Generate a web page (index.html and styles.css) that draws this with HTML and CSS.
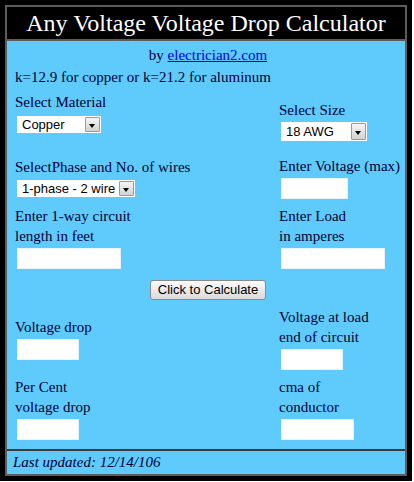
FILE: index.html
```html
<!DOCTYPE html>
<html lang="en">
<head>
    <meta charset="UTF-8">
    <meta name="viewport" content="width=device-width, initial-scale=1.0">
    <title>Any Voltage Voltage Drop Calculator</title>
    <link rel="stylesheet" href="styles.css">
</head>
<body>
    <div class="calc">
        <div class="frame">
            <h1 class="title">Any Voltage Voltage Drop Calculator</h1>

            <form class="panel" onsubmit="return false;">
                <p class="credit">by <a href="#">electrician2.com</a></p>
                <p class="note">k=12.9 for copper or k=21.2 for aluminum</p>

                <div class="row row-material">
                    <div class="field">
                        <label for="material">Select Material</label>
                        <span class="dropdown sel-material">
                            <select id="material">
                                <option>Copper</option>
                                <option>Aluminum</option>
                            </select>
                            <span class="arrow"></span>
                        </span>
                    </div>
                    <div class="field field-size">
                        <label for="size">Select Size</label>
                        <span class="dropdown sel-size">
                            <select id="size">
                                <option>18 AWG</option>
                                <option>16 AWG</option>
                                <option>14 AWG</option>
                                <option>12 AWG</option>
                                <option>10 AWG</option>
                            </select>
                            <span class="arrow"></span>
                        </span>
                    </div>
                </div>

                <div class="row row-phase">
                    <div class="field field-phase">
                        <label for="phase">SelectPhase and No. of wires</label>
                        <span class="dropdown sel-phase">
                            <select id="phase">
                                <option>1-phase - 2 wire</option>
                                <option>1-phase - 3 wire</option>
                                <option>3-phase - 3 wire</option>
                            </select>
                            <span class="arrow"></span>
                        </span>
                    </div>
                    <div class="field">
                        <label for="voltage">Enter Voltage (max)</label>
                        <input type="text" id="voltage" class="box w-voltage">
                    </div>
                </div>

                <div class="row row-length">
                    <div class="field">
                        <label for="length">Enter 1-way circuit<br>length in feet</label>
                        <input type="text" id="length" class="box w-wide">
                    </div>
                    <div class="field">
                        <label for="load">Enter Load<br>in amperes</label>
                        <input type="text" id="load" class="box w-wide">
                    </div>
                </div>

                <div class="actions">
                    <button type="button" class="calc-btn" onclick="calculate()">Click to Calculate</button>
                </div>

                <div class="row row-result">
                    <div class="field field-drop">
                        <label for="vdrop">Voltage drop</label>
                        <input type="text" id="vdrop" class="box w-small">
                    </div>
                    <div class="field">
                        <label for="vload">Voltage at load<br>end of circuit</label>
                        <input type="text" id="vload" class="box w-small">
                    </div>
                </div>

                <div class="row row-result">
                    <div class="field">
                        <label for="percent">Per Cent<br>voltage drop</label>
                        <input type="text" id="percent" class="box w-small">
                    </div>
                    <div class="field">
                        <label for="cma">cma of<br>conductor</label>
                        <input type="text" id="cma" class="box w-cma">
                    </div>
                </div>
            </form>

            <div class="footer">Last updated: 12/14/106</div>
        </div>
    </div>

    <script>
        // circular mils for each wire size
        const cmaTable = {
            '18 AWG': 1620, '16 AWG': 2580, '14 AWG': 4110,
            '12 AWG': 6530, '10 AWG': 10380
        };

        function calculate() {
            const k = document.getElementById('material').value === 'Copper' ? 12.9 : 21.2;
            const cma = cmaTable[document.getElementById('size').value];
            const phase = document.getElementById('phase').value;
            const volts = parseFloat(document.getElementById('voltage').value);
            const feet = parseFloat(document.getElementById('length').value);
            const amps = parseFloat(document.getElementById('load').value);
            if (!volts || !feet || !amps) return;

            const mult = phase.startsWith('3') ? 1.732 : 2;
            const drop = mult * k * feet * amps / cma;

            document.getElementById('vdrop').value = drop.toFixed(2);
            document.getElementById('vload').value = (volts - drop).toFixed(2);
            document.getElementById('percent').value = (drop / volts * 100).toFixed(2);
            document.getElementById('cma').value = cma;
        }
    </script>
</body>
</html>
```

FILE: styles.css
```css
body {
    margin: 0;
    font-family: "Liberation Serif", "Times New Roman", serif;
    color: #000033;
    background: #fff;
}
.calc {
    width: 412px;
    box-sizing: border-box;
    border: 5px solid #000;
    background: #000;
}
.frame {
    border: 2px solid #5c5c5c;
}
.title {
    margin: 0;
    height: 32px;
    line-height: 32px;
    font-size: 24px;
    font-weight: normal;
    color: #fff;
    text-align: center;
    background: #000;
}
.panel {
    background: #5fcbfc;
    border-top: 2px solid #5c5c5c;
    border-bottom: 2px solid #3c3c3c;
    padding: 4px 0 9px 8px;
    font-size: 15px;
    line-height: 20px;
}
.credit {
    margin: 0;
    padding-right: 4px;
    text-align: center;
}
.credit a {
    color: #0000ee;
}
.note {
    margin: 2px 0 0;
}
.row {
    display: grid;
    grid-template-columns: 264px 1fr;
}
.field label {
    display: block;
}
.row-material { margin-top: 5px; }
.row-phase { margin-top: 15px; }
.row-length { margin-top: 7px; }
.row-result { margin-top: 7px; }

.field-size { padding-top: 8px; }
.field-phase { padding-top: 1px; }
.field-drop { padding-top: 10px; }

/* text boxes */
.box {
    display: block;
    box-sizing: border-box;
    height: 21px;
    margin: 2px 0 0 2px;
    padding: 0 3px;
    border: 1px solid #e6f3fb;
    background: #fff;
    font: 13px "Liberation Sans", Arial, sans-serif;
}
.w-voltage { width: 67px; }
.w-wide { width: 104px; }
.w-small { width: 62px; }
.w-cma { width: 73px; }

/* drop-down lists with the old grey arrow button */
.dropdown {
    position: relative;
    display: block;
    margin: 2px 0 0 2px;
    background: #fff;
}
.dropdown select {
    appearance: none;
    -webkit-appearance: none;
    display: block;
    width: 100%;
    height: 100%;
    margin: 0;
    padding: 0 0 0 5px;
    border: 0;
    background: #fff;
    color: #000;
    font: 13px "Liberation Sans", Arial, sans-serif;
    outline: none;
}
.dropdown .arrow {
    position: absolute;
    top: 1px;
    right: 1px;
    bottom: 1px;
    width: 13px;
    border: 1px solid #9a9a9a;
    border-radius: 1px;
    background: linear-gradient(#f6f6f6, #d2d2d2);
    pointer-events: none;
}
.dropdown .arrow::after {
    content: "";
    position: absolute;
    left: 3px;
    top: 50%;
    margin-top: -1px;
    border-left: 3.5px solid transparent;
    border-right: 3.5px solid transparent;
    border-top: 4px solid #000;
}
.sel-material {
    width: 84px;
    height: 17px;
    margin-top: 4px;
}
.sel-size {
    width: 86px;
    height: 19px;
}
.sel-phase {
    width: 118px;
    height: 17px;
    margin-top: 3px;
}

.actions {
    margin-top: 10px;
    padding-right: 4px;
    text-align: center;
}
.calc-btn {
    box-sizing: border-box;
    width: 116px;
    height: 20px;
    padding: 0;
    border: 1px solid #8a8a8a;
    border-radius: 3px;
    background: linear-gradient(#fbfbfb, #dadada);
    color: #000;
    font: 13px "Liberation Sans", Arial, sans-serif;
    cursor: pointer;
}
.calc-btn:hover {
    background: linear-gradient(#ffffff, #e4e4e4);
}

.footer {
    background: #5fcbfc;
    height: 23px;
    line-height: 23px;
    padding-left: 6px;
    font-size: 15px;
    font-style: italic;
}
```
